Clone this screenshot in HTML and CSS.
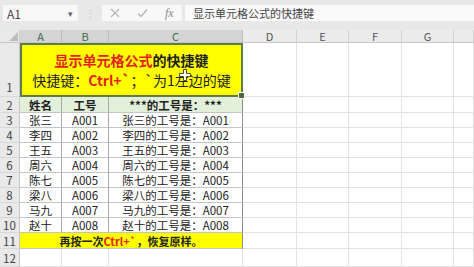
FILE: index.html
```html
<!DOCTYPE html>
<html lang="zh">
<head>
  <meta charset="UTF-8">
  <title>显示单元格公式的快捷键</title>
  <link rel="stylesheet" href="styles.css">
</head>
<body>

  <!-- 编辑栏 -->
  <div class="toolbar">
    <div class="namebox"><span>A1</span><span class="caret">▾</span></div>
    <div class="grip">⋮</div>
    <div class="fx-buttons">
      <svg width="10" height="10" viewBox="0 0 10 10"><path d="M1 1 L9 9 M9 1 L1 9" stroke="#b5b5b5" stroke-width="1.1" fill="none"/></svg>
      <svg width="11" height="10" viewBox="0 0 11 10"><path d="M1 5.5 L4 8.5 L10 1.5" stroke="#b5b5b5" stroke-width="1.3" fill="none"/></svg>
      <span class="fx">fx</span>
    </div>
    <div class="formula">显示单元格公式的快捷键</div>
  </div>

  <!-- 工作表 -->
  <div class="sheet">
    <div class="corner"></div>
    <div class="ch sel">A</div>
    <div class="ch sel">B</div>
    <div class="ch sel">C</div>
    <div class="ch">D</div>
    <div class="ch">E</div>
    <div class="ch">F</div>
    <div class="ch">G</div>
    <div class="ch"></div>

    <div class="rh bottom">1</div>
    <div class="title">
      <div class="line1"><span class="red">显示单元格公式</span>的快捷键</div>
      <div class="line2">快捷键：<b class="red">Ctrl+`</b>；`为1左边的键</div>
      <svg class="cursor" width="12" height="12" viewBox="0 0 12 12">
        <path d="M4.5 0.5 H7.5 V4.5 H11.5 V7.5 H7.5 V11.5 H4.5 V7.5 H0.5 V4.5 H4.5 Z" fill="#fff" stroke="#222" stroke-width="0.8"/>
      </svg>
      <div class="handle"></div>
    </div>
    <div class="c"></div><div class="c"></div><div class="c"></div><div class="c"></div><div class="c"></div>

    <div class="rh">2</div>
    <div class="d hdr">姓名</div>
    <div class="d hdr">工号</div>
    <div class="d hdr last">***的工号是：***</div>
    <div class="c"></div><div class="c"></div><div class="c"></div><div class="c"></div><div class="c"></div>

    <div class="rh">3</div>
    <div class="d">张三</div><div class="d">A001</div><div class="d last">张三的工号是：A001</div>
    <div class="c"></div><div class="c"></div><div class="c"></div><div class="c"></div><div class="c"></div>

    <div class="rh">4</div>
    <div class="d">李四</div><div class="d">A002</div><div class="d last">李四的工号是：A002</div>
    <div class="c"></div><div class="c"></div><div class="c"></div><div class="c"></div><div class="c"></div>

    <div class="rh">5</div>
    <div class="d">王五</div><div class="d">A003</div><div class="d last">王五的工号是：A003</div>
    <div class="c"></div><div class="c"></div><div class="c"></div><div class="c"></div><div class="c"></div>

    <div class="rh">6</div>
    <div class="d">周六</div><div class="d">A004</div><div class="d last">周六的工号是：A004</div>
    <div class="c"></div><div class="c"></div><div class="c"></div><div class="c"></div><div class="c"></div>

    <div class="rh">7</div>
    <div class="d">陈七</div><div class="d">A005</div><div class="d last">陈七的工号是：A005</div>
    <div class="c"></div><div class="c"></div><div class="c"></div><div class="c"></div><div class="c"></div>

    <div class="rh">8</div>
    <div class="d">梁八</div><div class="d">A006</div><div class="d last">梁八的工号是：A006</div>
    <div class="c"></div><div class="c"></div><div class="c"></div><div class="c"></div><div class="c"></div>

    <div class="rh">9</div>
    <div class="d">马九</div><div class="d">A007</div><div class="d last">马九的工号是：A007</div>
    <div class="c"></div><div class="c"></div><div class="c"></div><div class="c"></div><div class="c"></div>

    <div class="rh">10</div>
    <div class="d">赵十</div><div class="d">A008</div><div class="d last">赵十的工号是：A008</div>
    <div class="c"></div><div class="c"></div><div class="c"></div><div class="c"></div><div class="c"></div>

    <div class="rh">11</div>
    <div class="note">再按一次<span class="red">Ctrl+`</span>，恢复原样。</div>
    <div class="c"></div><div class="c"></div><div class="c"></div><div class="c"></div><div class="c"></div>

    <div class="rh">12</div>
    <div class="c"></div><div class="c"></div><div class="c"></div>
    <div class="c"></div><div class="c"></div><div class="c"></div><div class="c"></div><div class="c"></div>
  </div>

</body>
</html>
```

FILE: styles.css
```css
body {
  margin: 0;
  width: 474px;
  height: 267px;
  overflow: hidden;
  background-color: #fff;
  font-family: "Noto Sans CJK SC", "Noto Sans", sans-serif;
  color: #222;
}

/* 编辑栏 */
.toolbar {
  height: 30px;
  box-sizing: border-box;
  padding-top: 5px;
  background-color: #e8e8e8;
  display: flex;
  align-items: flex-start;
}

.namebox {
  width: 75px;
  height: 16px;
  margin-left: 3px;
  padding: 0 5px 0 4px;
  box-sizing: border-box;
  background-color: #f8f8f8;
  display: flex;
  align-items: center;
  justify-content: space-between;
  font-size: 12px;
  color: #444;
}

.caret {
  font-size: 9px;
  color: #666;
}

.grip {
  width: 24px;
  height: 16px;
  line-height: 16px;
  text-align: center;
  font-size: 11px;
  color: #bbb;
}

.fx-buttons {
  width: 80px;
  height: 16px;
  background-color: #f8f8f8;
  display: flex;
  align-items: center;
  justify-content: space-around;
}

.fx {
  font-family: "Liberation Serif", serif;
  font-style: italic;
  font-size: 12px;
  color: #888;
}

.formula {
  flex: 1;
  height: 16px;
  margin-left: 3px;
  padding-left: 8px;
  background-color: #fafafa;
  font-size: 11px;
  line-height: 16px;
  color: #444;
}

/* 工作表 */
.sheet {
  display: grid;
  grid-template-columns: 20px 42px 47px 134px 54px 52px 53px 52px 1fr;
  grid-template-rows: 13px 54px 16px repeat(8, 15px) 16px 1fr;
  height: 237px;
}

.sheet > div {
  box-sizing: border-box;
}

.corner {
  background-color: #e9e9e9;
  border-right: 1px solid #cfcfcf;
  border-bottom: 1px solid #c6c6c6;
  position: relative;
}

.corner::after {
  content: "";
  position: absolute;
  right: 1px;
  bottom: 1px;
  border-left: 9px solid transparent;
  border-bottom: 9px solid #bdbdbd;
}

.ch {
  background-color: #ebebeb;
  border-right: 1px solid #d2d2d2;
  border-bottom: 1px solid #c6c6c6;
  font-size: 11px;
  line-height: 12px;
  text-align: center;
  color: #555;
}

.ch.sel {
  background-color: #d4d4d4;
  color: #3f6a4c;
  border-right-color: #bcbcbc;
}

.rh {
  background-color: #e9e9e9;
  border-right: 1px solid #c6c6c6;
  border-bottom: 1px solid #d8d8d8;
  font-size: 11.5px;
  color: #444;
  display: flex;
  align-items: center;
  justify-content: center;
}

.rh.bottom {
  align-items: flex-end;
  padding-bottom: 1px;
}

.c {
  border-right: 1px solid #e2e2e2;
  border-bottom: 1px solid #e2e2e2;
}

.d {
  border-right: 1px solid #a9a9a9;
  border-bottom: 1px solid #c4c4c4;
  font-size: 11.5px;
  display: flex;
  align-items: center;
  justify-content: center;
  white-space: nowrap;
}

.d.last {
  border-right-color: #8c8c8c;
}

.hdr {
  background-color: #e2efda;
  font-weight: bold;
}

.red {
  color: #e3231a;
}

.title {
  grid-column: span 3;
  background-color: #ffff00;
  border: 2px solid #5d7c52;
  position: relative;
  display: flex;
  flex-direction: column;
  align-items: center;
  justify-content: center;
  font-size: 14px;
  line-height: 20px;
  white-space: nowrap;
}

.line1 {
  font-weight: bold;
}

.cursor {
  position: absolute;
  left: 157px;
  top: 24px;
}

.handle {
  position: absolute;
  right: -4px;
  bottom: -4px;
  width: 5px;
  height: 5px;
  background-color: #4a6b45;
  border: 1px solid #fff;
}

.note {
  grid-column: span 3;
  background-color: #ffff00;
  border-right: 1px solid #8c8c8c;
  border-bottom: 1px solid #c4c4c4;
  font-size: 11px;
  font-weight: bold;
  display: flex;
  align-items: center;
  justify-content: center;
  white-space: nowrap;
}
```
